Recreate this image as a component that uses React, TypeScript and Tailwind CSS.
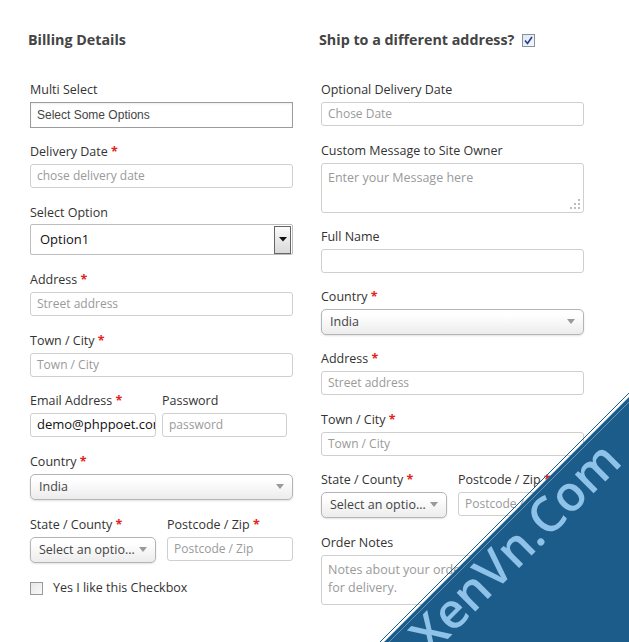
import React from 'react';

const Req = () => <span className="text-[#e2231a] font-bold"> *</span>;

function Label({ text, required }: { text: string; required?: boolean }) {
  return (
    <div className="text-[12.5px] leading-[18px] text-[#333] pt-[1px] mb-[3px] whitespace-nowrap">
      {text}
      {required && <Req />}
    </div>
  );
}

function TextBox({ placeholder, value, width }: { placeholder?: string; value?: string; width?: string }) {
  return (
    <div
      className={`${width ?? 'w-full'} h-[24px] border border-[#cfcfcf] rounded-[3px] bg-white px-[6px] flex items-center overflow-hidden whitespace-nowrap`}
    >
      {value ? (
        <span className="text-[13px] text-[#111]">{value}</span>
      ) : (
        <span className="text-[12px] text-[#9a9a9a]">{placeholder}</span>
      )}
    </div>
  );
}

function ChosenSelect({ text, width }: { text: string; width?: string }) {
  return (
    <div
      className={`${width ?? 'w-full'} h-[26px] border border-[#b4b4b4] rounded-[5px] bg-gradient-to-b from-white from-20% to-[#ececec] shadow-[0_1px_2px_rgba(0,0,0,0.12)] pl-[8px] pr-[8px] flex items-center justify-between`}
    >
      <span className="text-[12.5px] text-[#444] whitespace-nowrap">{text}</span>
      <svg width="8" height="6" viewBox="0 0 8 6">
        <path d="M0 0 H8 L4 5 Z" fill="#9a9a9a" />
      </svg>
    </div>
  );
}

function Grip() {
  const dots = [
    [8, 0],
    [4, 4],
    [8, 4],
    [0, 8],
    [4, 8],
    [8, 8],
  ];
  return (
    <svg width="10" height="10" viewBox="0 0 10 10" className="absolute right-[3px] bottom-[3px]">
      {dots.map(([x, y], i) => (
        <rect key={i} x={x} y={y} width="2" height="2" fill="#bdbdbd" />
      ))}
    </svg>
  );
}

function TextArea({ placeholder }: { placeholder: string }) {
  return (
    <div className="relative w-full h-[50px] border border-[#cfcfcf] rounded-[3px] bg-white px-[6px] pt-[5px] overflow-hidden">
      <div className="text-[12.5px] leading-[18px] text-[#9a9a9a]">{placeholder}</div>
      <Grip />
    </div>
  );
}

function Field({
  label,
  required,
  className,
  children,
}: {
  label: string;
  required?: boolean;
  className?: string;
  children: React.ReactNode;
}) {
  return (
    <div className={className}>
      <Label text={label} required={required} />
      {children}
    </div>
  );
}

function Watermark() {
  return (
    <svg className="absolute inset-0 pointer-events-none" width="629" height="642" viewBox="0 0 629 642">
      <line x1="378" y1="644" x2="631" y2="391" stroke="#1c5d8c" strokeWidth="1" />
      <polygon points="384,642 629,397 629,642" fill="#1b5c8b" />
      <line x1="389" y1="642" x2="629" y2="402" stroke="#ffffff" strokeOpacity="0.35" strokeWidth="1" />
      <text
        x="514"
        y="546"
        transform="rotate(-45 514 546)"
        textAnchor="middle"
        dominantBaseline="central"
        fill="#8ec2e8"
        fontFamily="Open Sans, sans-serif"
        fontWeight="600"
        fontSize="49"
      >
        XenVn.Com
      </text>
    </svg>
  );
}

export default function App() {
  return (
    <div className="relative w-[629px] h-[642px] overflow-hidden bg-white font-['Open_Sans',sans-serif]">
      <div className="flex gap-[26px] pl-[28px] pt-[30px]">
        {/* billing column */}
        <div className="w-[265px]">
          <h2 className="text-[14.3px] leading-[20px] font-bold text-[#444]">Billing Details</h2>
          <div className="ml-[2px] w-[263px] mt-[30px] flex flex-col">
            <Field label="Multi Select">
              <div className="h-[26px] border border-[#9c9c9c] bg-white shadow-[inset_0_1px_2px_rgba(0,0,0,0.08)] px-[6px] flex items-center">
                <span className="font-['Liberation_Sans',Arial,sans-serif] text-[12px] text-[#444]">Select Some Options</span>
              </div>
            </Field>
            <Field label="Delivery Date" required className="mt-[14px]">
              <TextBox placeholder="chose delivery date" />
            </Field>
            <div className="mt-[15px]">
              <div className="text-[12.5px] leading-[18px] text-[#333] pt-[1px] mb-[2px]">Select Option</div>
              <div className="h-[31px] border border-[#bdbdbd] rounded-[2px] bg-white flex items-center justify-between pl-[9px] pr-[1px]">
                <span className="text-[13px] text-[#111]">Option1</span>
                <div className="w-[17px] h-[28px] border border-[#666] bg-gradient-to-b from-[#fbfbfb] to-[#d9d9d9] flex items-center justify-center">
                  <svg width="8" height="5" viewBox="0 0 8 5">
                    <path d="M0 0 H8 L4 4.5 Z" fill="#111" />
                  </svg>
                </div>
              </div>
            </div>
            <Field label="Address" required className="mt-[15px]">
              <TextBox placeholder="Street address" />
            </Field>
            <Field label="Town / City" required className="mt-[15px]">
              <TextBox placeholder="Town / City" />
            </Field>
            <div className="flex gap-[6px] mt-[14px]">
              <Field label="Email Address" required>
                <TextBox value="demo@phppoet.com" width="w-[126px]" />
              </Field>
              <Field label="Password">
                <TextBox placeholder="password" width="w-[125px]" />
              </Field>
            </div>
            <Field label="Country" required className="mt-[15px]">
              <ChosenSelect text="India" />
            </Field>
            <div className="flex gap-[11px] mt-[15px]">
              <Field label="State / County" required>
                <ChosenSelect text="Select an optio..." width="w-[126px]" />
              </Field>
              <Field label="Postcode / Zip" required>
                <TextBox placeholder="Postcode / Zip" width="w-[126px]" />
              </Field>
            </div>
            <div className="flex items-center gap-[10px] mt-[16px]">
              <div className="w-[13px] h-[13px] border border-[#9a9a9a] bg-gradient-to-br from-[#e6e6e6] to-[#fafafa]" />
              <span className="text-[12.5px] leading-[18px] text-[#333]">Yes I like this Checkbox</span>
            </div>
          </div>
        </div>

        {/* shipping column */}
        <div className="w-[265px]">
          <h2 className="text-[14.3px] leading-[20px] font-bold text-[#444] flex items-center whitespace-nowrap">
            Ship to a different address?
            <span className="ml-[8px] w-[13px] h-[13px] border border-[#8392a0] bg-gradient-to-br from-[#dfe6ee] to-[#f7f9fb] flex items-center justify-center">
              <svg width="9" height="9" viewBox="0 0 9 9">
                <path d="M1 4.5 L3.5 7.5 L8 1" stroke="#263a8c" strokeWidth="1.6" fill="none" />
              </svg>
            </span>
          </h2>
          <div className="ml-[2px] w-[263px] mt-[30px] flex flex-col">
            <Field label="Optional Delivery Date">
              <TextBox placeholder="Chose Date" />
            </Field>
            <Field label="Custom Message to Site Owner" className="mt-[15px]">
              <TextArea placeholder="Enter your Message here" />
            </Field>
            <Field label="Full Name" className="mt-[14px]">
              <TextBox />
            </Field>
            <Field label="Country" required className="mt-[14px]">
              <ChosenSelect text="India" />
            </Field>
            <Field label="Address" required className="mt-[14px]">
              <TextBox placeholder="Street address" />
            </Field>
            <Field label="Town / City" required className="mt-[15px]">
              <TextBox placeholder="Town / City" />
            </Field>
            <div className="flex gap-[11px] mt-[14px]">
              <Field label="State / County" required>
                <ChosenSelect text="Select an optio..." width="w-[126px]" />
              </Field>
              <Field label="Postcode / Zip" required>
                <TextBox placeholder="Postcode / Zip" width="w-[126px]" />
              </Field>
            </div>
            <Field label="Order Notes" className="mt-[15px]">
              <TextArea placeholder="Notes about your order, e.g. special notes for delivery." />
            </Field>
          </div>
        </div>
      </div>
      <Watermark />
    </div>
  );
}
